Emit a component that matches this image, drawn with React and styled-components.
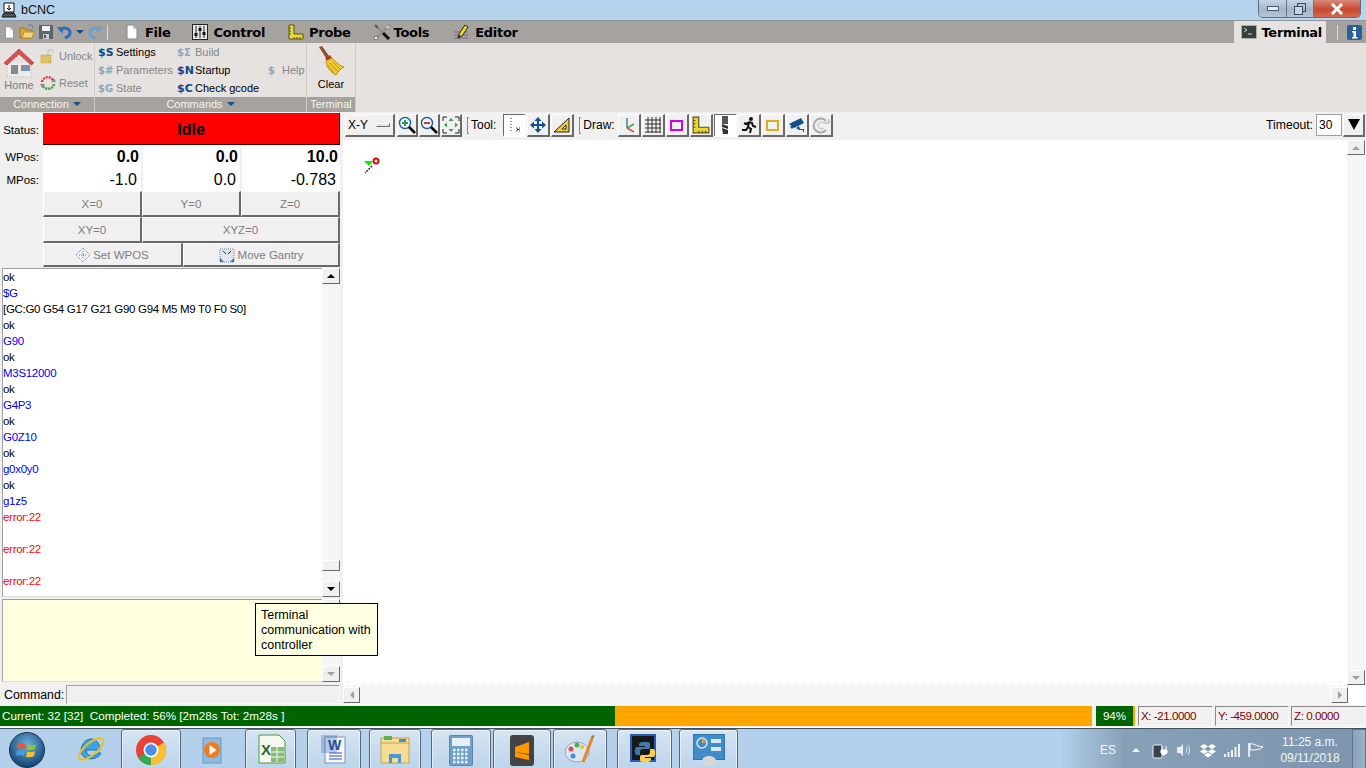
import React from 'react';
import styled, { createGlobalStyle } from 'styled-components';

const GlobalStyle = createGlobalStyle`
  html, body { margin: 0; padding: 0; height: 100%; overflow: hidden; }
  body { font-family: "Liberation Sans", Arial, sans-serif; font-size: 12px; color: #000; background: #f0f0f0; }
  * { box-sizing: border-box; }
`;

const hatch = 'repeating-conic-gradient(#eeeeee 0 25%, #ffffff 0 50%) 0 0 / 2px 2px';

const Window = styled.div`
  width: 1366px;
  height: 768px;
  display: flex;
  flex-direction: column;
  position: relative;
  overflow: hidden;
`;

/* title bar */
const TitleBar = styled.div`
  height: 21px;
  flex: none;
  display: flex;
  align-items: flex-start;
  background: linear-gradient(#b4d2ec, #b9d4ec);
  border-bottom: 1px solid #8a949c;
`;
const AppIcon = styled.span`
  margin: 2px 0 0 1px;
  width: 16px;
  height: 16px;
`;
const TitleText = styled.span`
  margin: 3px 0 0 4px;
  font-size: 12.5px;
  color: #111;
`;
const WinButtons = styled.div`
  margin-left: auto;
  margin-right: 5px;
  height: 18px;
  display: flex;
  border: 1px solid #5d6c7c;
  border-top: none;
  border-radius: 0 0 5px 5px;
  overflow: hidden;
`;
const WinButton = styled.div`
  width: ${p => p.$w}px;
  display: flex;
  align-items: center;
  justify-content: center;
  background: ${p => p.$close ? 'linear-gradient(#d68a78, #c8492f 55%, #cf6a50)' : 'linear-gradient(#c5d6e6, #a3b6ca 55%, #b4c6d8)'};
  border-right: 1px solid #66788a;
  &:last-child { border-right: none; }
`;

/* tab row */
const MenuRow = styled.div`
  height: 22px;
  flex: none;
  display: flex;
  align-items: center;
  background: #a6a29d;
`;
const Quick = styled.div`
  display: flex;
  align-items: center;
  gap: 3px;
  padding-left: 3px;
  width: 124px;
  flex: none;
`;
const QuickSep = styled.span`
  width: 1px;
  height: 15px;
  background: #e0ded9;
  margin-left: 1px;
`;
const Tab = styled.div`
  display: flex;
  align-items: center;
  gap: ${p => p.$gap || 5}px;
  height: 22px;
  margin-left: ${p => p.$auto ? 'auto' : `${p.$ml || 0}px`};
  margin-right: ${p => p.$mr || 0}px;
  padding: ${p => p.$active ? '0 4px 0 7px' : '0'};
  background: ${p => p.$active ? '#e6e2df' : 'transparent'};
  font-family: "DejaVu Sans", sans-serif;
  font-weight: bold;
  font-size: 13px;
  letter-spacing: -0.3px;
  color: #000;
`;
const TabSep = styled.span`
  width: 1px;
  height: 15px;
  background: #e0ded9;
  margin-left: 11px;
`;

/* ribbon */
const Ribbon = styled.div`
  height: 69px;
  flex: none;
  display: flex;
  background: #e6e2df;
`;
const Group = styled.div`
  width: ${p => p.$w}px;
  display: flex;
  flex-direction: column;
  border-right: 1px solid #cfcbc7;
`;
const GroupBody = styled.div`
  height: 54px;
  flex: none;
  display: flex;
`;
const GroupLabel = styled.div`
  flex: 1;
  display: flex;
  align-items: center;
  justify-content: center;
  gap: 4px;
  padding-bottom: 2px;
  background: #a6a29d;
  color: #f4f4f4;
  font-size: 11px;
`;
const Caret = styled.span`
  width: 0;
  height: 0;
  border-left: 4px solid transparent;
  border-right: 4px solid transparent;
  border-top: 4px solid #174f8c;
`;
const HomeBtn = styled.div`
  width: 38px;
  display: flex;
  flex-direction: column;
  align-items: center;
  padding-top: 5px;
  color: #7d7d7d;
  font-size: 11px;
  gap: 1px;
`;
const RibbonCol = styled.div`
  display: flex;
  flex-direction: column;
  padding: ${p => p.$pad || '0'};
  width: ${p => p.$w ? `${p.$w}px` : 'auto'};
  gap: ${p => p.$gap || 0}px;
`;
const SmallBtn = styled.div`
  height: ${p => p.$h || 18}px;
  display: flex;
  align-items: center;
  gap: 3px;
  white-space: nowrap;
  font-size: 11px;
  color: ${p => p.$off ? '#858585' : '#000'};
`;
const Dollar = styled.span`
  font-family: "DejaVu Sans", sans-serif;
  font-weight: bold;
  font-size: ${p => p.$off ? 10 : 11}px;
  color: ${p => p.$off ? '#8ca6c0' : '#0d4a8a'};
  width: ${p => p.$w || 15}px;
`;
const ClearBtn = styled.div`
  width: 100%;
  display: flex;
  flex-direction: column;
  align-items: center;
  padding-top: 3px;
  font-size: 11px;
  gap: 2px;
`;

/* main area */
const Main = styled.div`
  height: 593px;
  flex: none;
  display: flex;
  background: #f0f0f0;
`;
const LeftPanel = styled.div`
  width: 343px;
  flex: none;
  display: flex;
  flex-direction: column;
  padding-top: 1px;
`;
const StatusRow = styled.div`
  display: grid;
  grid-template-columns: 41px 297px;
  gap: 2px;
  height: 33px;
`;
const FieldLabel = styled.div`
  display: flex;
  align-items: center;
  justify-content: flex-end;
  padding-right: 2px;
  font-size: 11.5px;
`;
const IdleBar = styled.div`
  background: #ff0000;
  border-bottom: 1px solid #300;
  border-right: 1px solid #300;
  margin-bottom: 1px;
  padding-top: 2px;
  display: flex;
  align-items: center;
  justify-content: center;
  font-weight: bold;
  font-size: 16px;
`;
const Dro = styled.div`
  display: grid;
  grid-template-columns: 41px 98px 97px 98px;
  grid-auto-rows: 22.5px;
  column-gap: 2px;
`;
const DroValue = styled.div`
  background: #fff;
  display: flex;
  align-items: center;
  justify-content: flex-end;
  padding-right: ${p => p.$bold ? 2 : 4}px;
  font-size: 16px;
  font-weight: ${p => p.$bold ? 'bold' : 'normal'};
`;
const ButtonRow = styled.div`
  display: grid;
  grid-template-columns: ${p => p.$cols};
  margin-left: 43px;
  width: 297px;
  height: ${p => p.$h}px;
`;
const RaisedBtn = styled.div`
  display: flex;
  align-items: center;
  justify-content: center;
  gap: 3px;
  background: #f0f0f0;
  border: 1px solid;
  border-color: #fff #696969 #696969 #fff;
  border-right-width: 2px;
  border-bottom-width: 2px;
  color: #7d7d7d;
  font-size: 11.5px;
`;
const ListBox = styled.div`
  display: flex;
  height: ${p => p.$h}px;
  margin-top: ${p => p.$mt || 0}px;
  padding-left: 2px;
  width: 340px;
`;
const Lines = styled.div`
  flex: 1;
  background: ${p => p.$bg};
  border: 1px solid #a0a0a0;
  border-right: none;
  border-bottom-color: #dcdcdc;
  overflow: hidden;
  width: 320px;
`;
const Line = styled.div`
  height: 16px;
  line-height: 16px;
  font-size: 11.5px;
  letter-spacing: -0.3px;
  white-space: nowrap;
  color: ${p => p.$tone || '#000'};
`;
const VScroll = styled.div`
  width: 18px;
  flex: none;
  display: flex;
  flex-direction: column;
  background: ${hatch};
`;
const CanvasScroll = styled(VScroll)`
  margin-right: 1px;
`;
const ScrollBtn = styled.div`
  height: ${p => p.$h || 16}px;
  width: ${p => p.$w ? `${p.$w}px` : '100%'};
  flex: none;
  display: flex;
  align-items: center;
  justify-content: center;
  background: #f0f0f0;
  border: 1px solid;
  border-color: #fff #696969 #696969 #fff;
`;
const Track = styled.div`
  flex: ${p => p.$h ? 'none' : 1};
  height: ${p => p.$h ? `${p.$h}px` : 'auto'};
`;
const Arrow = styled.span`
  width: 0;
  height: 0;
  border-left: ${p => p.$dir === 'left' ? 'none' : p.$dir === 'right' ? `4px solid ${p.$c}` : '4px solid transparent'};
  border-right: ${p => p.$dir === 'right' ? 'none' : p.$dir === 'left' ? `4px solid ${p.$c}` : '4px solid transparent'};
  border-top: ${p => p.$dir === 'down' ? `4px solid ${p.$c}` : p.$dir === 'up' ? 'none' : '4px solid transparent'};
  border-bottom: ${p => p.$dir === 'up' ? `4px solid ${p.$c}` : p.$dir === 'down' ? 'none' : '4px solid transparent'};
`;
const CommandRow = styled.div`
  margin-top: 3px;
  display: flex;
  align-items: center;
  height: 19px;
  padding-left: 4px;
  width: 340px;
  font-size: 12.3px;
`;
const CommandInput = styled.div`
  flex: 1;
  height: 19px;
  margin-left: 2px;
  background: #f0f0f0;
  border: 1px solid;
  border-color: #a0a0a0 #f8f8f8 #f8f8f8 #a0a0a0;
`;
const Tooltip = styled.div`
  position: absolute;
  left: 255px;
  top: 603px;
  width: 123px;
  height: 53px;
  background: #ffffe1;
  border: 1px solid #000;
  padding: 4px 0 0 5px;
  font-size: 12.5px;
  line-height: 15px;
  z-index: 5;
`;

/* right side */
const RightPanel = styled.div`
  flex: 1;
  display: flex;
  flex-direction: column;
  min-width: 0;
  background: #fff;
`;
const Toolbar = styled.div`
  height: 28px;
  flex: none;
  display: flex;
  align-items: flex-start;
  padding: 2px 1px 0 2px;
  background: #f0f0f0;
  gap: 1px;
  font-size: 12px;
`;
const ToolBtn = styled.div`
  width: ${p => p.$w || 23}px;
  height: 23px;
  margin-left: ${p => p.$ml || 0}px;
  display: flex;
  align-items: center;
  justify-content: center;
  flex: none;
  background: ${p => p.$on ? '#fff' : '#f0f0f0'};
  border: 1px solid;
  border-color: ${p => p.$on ? '#696969 #fff #fff #696969' : '#fff #696969 #696969 #fff'};
  border-right-width: 2px;
  border-bottom-width: 2px;
`;
const Combo = styled(ToolBtn)`
  justify-content: flex-start;
  gap: 8px;
  padding-left: 2px;
  font-size: 12px;
`;
const ComboBar = styled.span`
  width: 14px;
  height: 4px;
  background: #e4e4e4;
  border: 1px solid;
  border-color: #fff #696969 #696969 #fff;
`;
const ToolSep = styled.span`
  width: 2px;
  height: 17px;
  margin: 3px 0 0 4px;
  border-left: 1px solid #8a8a8a;
  border-top: 1px solid #8a8a8a;
  border-bottom: 1px solid #8a8a8a;
`;
const ToolLabel = styled.span`
  line-height: 23px;
  margin: 0 ${p => p.$mr || 0}px 0 1px;
`;
const TimeoutLabel = styled.span`
  margin-left: auto;
  line-height: 23px;
  font-size: 12.2px;
`;
const TimeoutInput = styled.div`
  width: 26px;
  height: 22px;
  margin: 0 0 0 2px;
  background: #fff;
  border: 1px solid #a0a0a0;
  padding-left: 2px;
  line-height: 20px;
  font-size: 12px;
`;
const CanvasRow = styled.div`
  flex: 1;
  display: flex;
  min-height: 0;
`;
const Canvas = styled.div`
  flex: 1;
  position: relative;
  background: #fff;
  margin-left: 2px;
`;
const Marker = styled.svg`
  position: absolute;
  left: 19px;
  top: 17px;
`;
const HScroll = styled.div`
  height: 20px;
  flex: none;
  display: flex;
  background: ${hatch};
  padding: 2px 0;
  margin-right: 18px;
  & > div:last-child { margin-left: auto; }
`;

/* progress strip */
const StatusStrip = styled.div`
  height: 22px;
  flex: none;
  margin-top: 1px;
  display: flex;
  background: #f0f0f0;
  border-bottom: 1px solid #fff;
`;
const Progress = styled.div`
  width: 1092px;
  height: 20px;
  flex: none;
  display: flex;
  background: #ffa500;
  margin-right: 4px;
`;
const Done = styled.div`
  width: 615px;
  background: #006400;
  color: #fff;
  font-size: 11.7px;
  line-height: 20px;
  padding-left: 2px;
  white-space: pre;
`;
const Percent = styled.div`
  width: 39px;
  height: 20px;
  flex: none;
  background: #006400;
  border-right: 2px solid #ffa500;
  color: #fff;
  text-align: center;
  line-height: 20px;
  font-size: 11.6px;
  margin-right: 3px;
`;
const Coord = styled.div`
  width: ${p => p.$w}px;
  height: 20px;
  flex: none;
  margin-right: 2px;
  border: 1px solid;
  border-color: #8a8a8a #f8f8f8 #f8f8f8 #8a8a8a;
  color: #800000;
  padding-left: 2px;
  line-height: 18px;
  font-size: 11.6px;
  letter-spacing: -0.45px;
`;

/* windows taskbar */
const Taskbar = styled.div`
  flex: 1;
  display: flex;
  align-items: stretch;
  border-top: 1px solid #3f4f5f;
  background: linear-gradient(90deg, #b5d0ea 0, #b5d0ea 1060px, #86a0b8 1125px, #7d96ad 100%);
`;
const Orb = styled.div`
  width: 73px;
  flex: none;
  padding: 3px 0 0 9px;
`;
const Pin = styled.div`
  width: ${p => p.$w}px;
  margin-left: ${p => p.$ml || 0}px;
  flex: none;
  display: flex;
  align-items: center;
  justify-content: center;
  border: ${p => p.$plain ? '1px solid transparent' : '1px solid #56697c'};
  border-radius: 3px;
  background: ${p => p.$plain ? 'transparent' : 'linear-gradient(#d5e4f2, #bcd4ea)'};
  box-shadow: ${p => p.$plain ? 'none' : 'inset 0 0 0 1px rgba(255,255,255,.55)'};
`;
const Tray = styled.div`
  margin-left: auto;
  display: flex;
  align-items: center;
  color: #f2f6fa;
  font-size: 12px;
`;
const TrayLang = styled.span`
  margin-right: 8px;
`;
const TrayIcon = styled.span`
  width: 24px;
  display: flex;
  justify-content: center;
`;
const Clock = styled.div`
  width: 74px;
  margin-left: 5px;
  text-align: center;
  line-height: 16px;
  font-size: 12px;
`;
const ShowDesktop = styled.div`
  width: 14px;
  height: 100%;
  margin-left: 5px;
  border: 1px solid #5f7489;
  background: linear-gradient(90deg, #8aa3ba, #9bb2c8);
`;

/* icons */
const Svg = ({ s = 16, w, h, vb, children }) => (
  <svg width={w || s} height={h || s} viewBox={vb || `0 0 ${w || s} ${h || s}`}>{children}</svg>
);

const DocIcon = ({ s = 16 }) => (
  <Svg s={s} vb="0 0 16 16">
    <path d="M3 1h7l3 3v11H3z" fill="#fdfdfd" stroke="#7f8a99" />
    <path d="M10 1v3h3" fill="#d5deea" stroke="#7f8a99" />
  </Svg>
);
const OpenIcon = () => (
  <Svg>
    <path d="M1 4h5l1 2h6v8H1z" fill="#d9a63b" stroke="#a27a26" />
    <path d="M3 14l2-6h10l-2 6z" fill="#f6d67d" stroke="#b88d2d" />
    <path d="M9 1l4 0 1 3" fill="none" stroke="#5a7fa8" />
  </Svg>
);
const SaveIcon = () => (
  <Svg>
    <path d="M1 1h14v14H1z" fill="#5b6470" />
    <path d="M4 2h8v5H4z" fill="#f2f2f2" />
    <path d="M5 10h6v5H5z" fill="#c8ccd2" />
    <path d="M6 11h2v3H6z" fill="#4b535e" />
  </Svg>
);
const UndoIcon = ({ flip, c = '#2f6cbf' }) => (
  <Svg>
    <g transform={flip ? 'matrix(-1 0 0 1 16 0)' : undefined}>
      <path d="M3 7c2-4 9-4 10 1 .4 3-2 5-5 6" fill="none" stroke={c} strokeWidth="3" />
      <path d="M0 3l6 0 0 7z" fill={c} />
    </g>
  </Svg>
);
const ControlIcon = () => (
  <Svg>
    <rect x=".5" y=".5" width="15" height="15" fill="#e8e8e8" stroke="#222" />
    <path d="M4 2v12M8 2v12M12 2v12" stroke="#222" />
    <rect x="2.500" y="9" width="3" height="3" fill="#111" />
    <rect x="6.500" y="4" width="3" height="3" fill="#111" />
    <rect x="10.500" y="8" width="3" height="3" fill="#111" />
  </Svg>
);
const RulerIcon = ({ s = 16 }) => (
  <Svg s={s} vb="0 0 16 16">
    <path d="M1 1h5v9h9v5H1z" fill="#e8d838" stroke="#5a5210" />
    <path d="M1 4h2M1 7h2M1 10h2M6 15v-2M9 15v-2M12 15v-2" stroke="#5a5210" />
  </Svg>
);
const ToolsIcon = () => (
  <Svg w={18} h={16}>
    <path d="M2 1l3 3" stroke="#555" strokeWidth="2" />
    <path d="M5 4l5 5" stroke="#888" strokeWidth="1.600" />
    <path d="M9 8l7 7" stroke="#111" strokeWidth="3" />
    <path d="M14 4L3 14" stroke="#8f8f8f" strokeWidth="2.200" />
    <path d="M16 1c-2-1-4 1-3 3l2 1c2 0 3-2 2-4l-2 2z" fill="#d8d8d8" stroke="#777" strokeWidth=".7" />
    <circle cx="3" cy="14" r="2" fill="#f0f0f0" stroke="#666" />
  </Svg>
);
const EditorIcon = () => (
  <Svg>
    <path d="M0 8h14M0 11h14M0 14h14" stroke="#7468a0" />
    <path d="M5 10l6-9 3 2-6 9-4 2z" fill="#f5d823" stroke="#222" />
    <path d="M4 14l1-3 2 1z" fill="#222" />
  </Svg>
);
const TerminalIcon = () => (
  <Svg>
    <rect x=".5" y="1.500" width="15" height="13" fill="#34403c" stroke="#a9aeb0" />
    <path d="M3 4l3 2-3 2M7 10h4" stroke="#c8d0cc" fill="none" />
  </Svg>
);
const InfoIcon = () => (
  <Svg s={15} w={15} h={15}>
    <rect width="15" height="15" rx="2" fill="#2a6099" />
    <rect x="6" y="2" width="3" height="3" fill="#fff" />
    <path d="M5 6h4v6h1.500v1.500h-5.500V12h1.500V7.500H5z" fill="#fff" />
  </Svg>
);
const HomeIcon = () => (
  <Svg w={32} h={30} vb="0 0 32 30">
    <path d="M4 15v14h24V15" fill="#ececec" stroke="#bbb" strokeDasharray="1 1" />
    <path d="M1 15L16 1l15 14-3 2L16 6 4 17z" fill="#d95050" stroke="#b03434" strokeDasharray="2 1" />
    <rect x="8" y="17" width="7" height="9" fill="#888" />
    <rect x="18" y="17" width="9" height="6" fill="#7d8fb0" />
  </Svg>
);
const UnlockIcon = () => (
  <Svg>
    <rect x="1" y="7" width="10" height="8" fill="#e0c060" stroke="#bda24e" strokeDasharray="1 1" />
    <path d="M8 7V3c1-2 4-2 5 0v2" fill="none" stroke="#aaa" strokeDasharray="1 1" strokeWidth="1.500" />
  </Svg>
);
const ResetIcon = () => (
  <Svg>
    <path d="M2 7a6 6 0 0 1 11-2" fill="none" stroke="#d84040" strokeWidth="2.500" strokeDasharray="2 1" />
    <path d="M14 9a6 6 0 0 1-11 2" fill="none" stroke="#36a030" strokeWidth="2.500" strokeDasharray="2 1" />
    <path d="M11 7h5l-2-4zM5 9H0l2 4z" fill="#8a8a8a" />
  </Svg>
);
const BroomIcon = () => (
  <Svg w={28} h={30} vb="0 0 28 30">
    <path d="M2 1l3-1 7 10-3 2z" fill="#8a5428" />
    <path d="M8 12l5-3 2 3-5 3z" fill="#c0302a" />
    <path d="M9 15l6-3c4 4 8 8 12 9-4 2-6 5-8 8-3-1-7-5-9-9z" fill="#eec92f" stroke="#b8941c" />
    <path d="M13 17l8 9M11 19l6 8M16 16l7 7" stroke="#b8941c" />
  </Svg>
);
const TargetIcon = () => (
  <Svg s={14}>
    <path d="M7 0l7 7-7 7-7-7z" fill="none" stroke="#4f82c0" strokeDasharray="1 1" />
    <path d="M7 3v8M3 7h8" stroke="#4f82c0" strokeDasharray="1 1" />
  </Svg>
);
const GantryIcon = () => (
  <Svg>
    <rect x="1" y="2" width="14" height="13" fill="#dfe6ee" stroke="#6688aa" strokeDasharray="1 1" />
    <path d="M1 11l4 4h6l4-4v4H1z" fill="#3f6f9f" />
    <path d="M4 4l3 3M12 4L9 7" stroke="#333" />
  </Svg>
);
const ZoomIcon = ({ kind }) => (
  <Svg s={18}>
    <circle cx="7" cy="7" r="5.500" fill="#f2f7fb" stroke="#1e5e9c" strokeWidth="1.400" />
    <path d="M4 7h6" stroke={kind === 'in' ? '#2c9a50' : '#c83c3c'} strokeWidth="2" />
    {kind === 'in' && <path d="M7 4v6" stroke="#2c9a50" strokeWidth="2" />}
    <path d="M11 11l6 6" stroke="#000" strokeWidth="2.500" />
  </Svg>
);
const FitIcon = () => (
  <Svg s={18}>
    <path d="M1 5V1h4M13 1h4v4M17 13v4h-4M5 17H1v-4" fill="none" stroke="#222" />
    <path d="M9 2l2.500 3h-5zM9 16l2.500-3h-5zM2 9l3-2.500v5zM16 9l-3-2.500v5z" fill="#3f9a55" />
  </Svg>
);
const PointerIcon = () => (
  <Svg>
    <path d="M5 1v14" stroke="#333" strokeDasharray="1 2" />
    <path d="M10 11h1M13 11h1M10 14h1M13 14h1M11 12h2v1h-2z" stroke="#333" strokeDasharray="1 1" />
  </Svg>
);
const MoveIcon = () => (
  <Svg s={18}>
    <path d="M9 1l3.500 4H10v3h3V5.500L17 9l-4 3.500V10h-3v3h2.500L9 17l-3.500-4H8v-3H5v2.500L1 9l4-3.500V8h3V5H5.500z" fill="#12508f" />
  </Svg>
);
const SquareIcon = () => (
  <Svg s={18}>
    <path d="M1 16L16 2v14z" fill="#eec92f" stroke="#222" />
    <path d="M9 13l4-4v4z" fill="#f0f0f0" stroke="#222" />
  </Svg>
);
const AxesIcon = () => (
  <Svg s={18}>
    <path d="M7 2v10" stroke="#4a8f9a" strokeWidth="1.600" />
    <path d="M7 12l7-4" stroke="#4fa04f" strokeWidth="1.600" />
    <path d="M7 12l7 4" stroke="#d65050" strokeWidth="1.600" />
  </Svg>
);
const GridIcon = () => (
  <Svg s={18}>
    <path d="M1 4h16M1 8h16M1 12h16M1 16h16M4 1v16M8 1v16M12 1v16M16 1v16" stroke="#333" />
  </Svg>
);
const RectIcon = ({ c, s = 12, h = 10 }) => (
  <Svg w={s + 1} h={h + 1}>
    <rect x="1" y="1" width={s - 1} height={h - 1} fill="none" stroke={c} strokeWidth="2" />
  </Svg>
);
const EndmillIcon = () => (
  <Svg w={8} h={19}>
    <rect x="1" y="0" width="6" height="8" fill="#555" />
    <path d="M1 8l6 2v3l-6-2zM1 12l6 2v4H2z" fill="#333" />
  </Svg>
);
const RunnerIcon = () => (
  <Svg s={18}>
    <circle cx="11" cy="3" r="2" fill="#111" />
    <path d="M9 6l3 1 1 3 3 1M9 6L6 8 4 7M9 6l-1 5 3 2-1 4M8 11l-2 3-4 0" fill="none" stroke="#111" strokeWidth="2" />
  </Svg>
);
const CameraIcon = () => (
  <Svg s={18}>
    <path d="M1 8l12-6 3 5-10 5z" fill="#174f8c" />
    <path d="M8 12l3-2 1 3h4v3h-1v-2h-4z" fill="#174f8c" />
    <circle cx="4" cy="11" r="1.500" fill="#174f8c" />
  </Svg>
);
const RedoGrayIcon = () => (
  <Svg s={18}>
    <path d="M14 5a7 7 0 1 0 0 9" fill="none" stroke="#aaa" strokeWidth="2" />
    <path d="M12 7a3.500 3.500 0 1 0 0 5" fill="none" stroke="#bbb" />
    <path d="M17 3v4h-5" fill="#f0f0f0" stroke="#aaa" />
  </Svg>
);
const TimeIcon = () => (
  <Svg w={14} h={16}>
    <path d="M1 2h12l-6 11z" fill="#000" />
  </Svg>
);

const StartOrb = () => (
  <Svg s={36}>
    <defs>
      <radialGradient id="orb" cx="50%" cy="35%" r="65%">
        <stop offset="0" stopColor="#6fb0de" />
        <stop offset="1" stopColor="#12406e" />
      </radialGradient>
    </defs>
    <circle cx="18" cy="18" r="17.500" fill="url(#orb)" stroke="#16344f" />
    <path d="M9 12c3-1.500 5-1 8 0l-1 5c-3-1-5-1.500-8 0z" fill="#e8563a" />
    <path d="M19 12.500c3 1 5 1 8-.5l-1 5c-3 1.500-5 1.500-8 .5z" fill="#8cc63f" />
    <path d="M8 19c3-1.500 5-1 8 0l-1 5c-3-1-5-1.500-8 0z" fill="#3fa0e0" />
    <path d="M18 19.500c3 1 5 1 8-.5l-1 5c-3 1.500-5 1.500-8 .5z" fill="#f5c330" />
  </Svg>
);
const IeIcon = () => (
  <Svg w={32} h={36}>
    <path d="M6 19c0-7 5-12 10-12s9 4 9 11H11c0 6 8 8 12 3h3c-3 8-20 8-20-2z" fill="#3aa4e8" stroke="#1d6fb5" />
    <ellipse cx="16" cy="17" rx="15" ry="6" transform="rotate(-40 16 17)" fill="none" stroke="#f0c020" strokeWidth="2" />
  </Svg>
);
const ChromeIcon = () => (
  <Svg s={32}>
    <circle cx="16" cy="16" r="15" fill="#e84335" />
    <path d="M16 16L3 23.500A15 15 0 0 0 16 31z" fill="#34a853" />
    <path d="M16 16l0 15A15 15 0 0 0 29 8.500z" fill="#fbc02d" />
    <circle cx="16" cy="16" r="7.500" fill="#fff" />
    <circle cx="16" cy="16" r="5.800" fill="#4a8df0" />
  </Svg>
);
const MediaIcon = () => (
  <Svg w={24} h={30}>
    <rect x="2" y="3" width="18" height="25" fill="#8dbbe0" stroke="#6c9cc4" />
    <circle cx="11" cy="15" r="8" fill="#ef7d1f" />
    <path d="M8.500 10l7 5-7 5z" fill="#fff" />
  </Svg>
);
const ExcelIcon = () => (
  <Svg w={30} h={32}>
    <path d="M3 1h20l6 6v22H3z" fill="#f4f8f1" stroke="#4d9a3e" />
    <path d="M15 13h13v15H15z" fill="#8ab97c" />
    <path d="M15 18h13M15 23h13M21 13v15" stroke="#f4f8f1" />
    <text x="5" y="21" fontFamily="Liberation Sans" fontWeight="bold" fontSize="15" fill="#1d6f2e">X</text>
  </Svg>
);
const WordIcon = () => (
  <Svg w={30} h={32}>
    <path d="M6 3h20v26H6z" fill="#f5f7fb" stroke="#7d92b8" />
    <path d="M2 1h16v18H2z" fill="#2a5db0" opacity=".3" />
    <text x="9" y="16" fontFamily="Liberation Sans" fontWeight="bold" fontSize="14" fill="#1e4f9f">W</text>
    <path d="M10 19h13M10 22h13M10 25h13" stroke="#2a5db0" />
  </Svg>
);
const FolderIcon = () => (
  <Svg w={32} h={30}>
    <path d="M2 3h28v25H2z" fill="#f7dd93" stroke="#c7a24e" />
    <path d="M2 8h28" stroke="#c7a24e" />
    <rect x="5" y="1" width="8" height="4" fill="#5fb04f" />
    <rect x="20" y="4" width="7" height="3" fill="#3f8fd8" />
    <path d="M10 28v-9h12v9h-3v-5h-6v5z" fill="#4b97d8" />
  </Svg>
);
const CalcIcon = () => (
  <Svg w={24} h={31}>
    <rect x=".5" y=".5" width="23" height="30" rx="1" fill="#6f9fcb" stroke="#5c86ae" />
    <rect x="3" y="3" width="18" height="8" fill="#e7eff7" />
    <path d="M4 15h16M4 19h16M4 23h16M4 27h16" stroke="#f0f4f8" strokeWidth="2.500" strokeDasharray="2.500 1.500" />
  </Svg>
);
const SublimeIcon = () => (
  <Svg w={24} h={31}>
    <rect width="24" height="31" rx="3" fill="#444" />
    <path d="M5 12l14-5v5L5 17zM5 17l14 3v5l-14-3zM5 17l14-5v7z" fill="#ff9800" />
  </Svg>
);
const PaintIcon = () => (
  <Svg w={32} h={32}>
    <ellipse cx="13" cy="18" rx="12" ry="10" fill="#dce6ee" stroke="#93a8ba" />
    <circle cx="7" cy="15" r="2.500" fill="#e04f40" />
    <circle cx="13" cy="11" r="2.500" fill="#4fb04f" />
    <circle cx="9" cy="22" r="2.500" fill="#3f8fd8" />
    <circle cx="18" cy="13" r="2" fill="#f0c020" />
    <path d="M29 2L19 28" stroke="#e08a2c" strokeWidth="3" />
    <path d="M31 1l-4 1 2 2z" fill="#8a7a5a" />
  </Svg>
);
const PythonIcon = () => (
  <Svg w={30} h={32}>
    <rect x="1" y="1" width="24" height="26" fill="#16181c" stroke="#2a5db0" strokeWidth="2" />
    <path d="M14 8c-5 0-5 2-5 4h6v1H7c-3 0-3 8 0 8h3v-3c0-2 1-3 3-3h5c2 0 2-1 2-2v-3c0-2-2-2-6-2z" fill="#3f79ac" />
    <path d="M16 28c5 0 5-2 5-4h-6v-1h8c3 0 3-8 0-8h-3v3c0 2-1 3-3 3h-5c-2 0-2 1-2 2v3c0 2 2 2 6 2z" fill="#f6cf4b" />
  </Svg>
);
const PanelIcon = () => (
  <Svg w={32} h={32}>
    <rect x=".5" y=".5" width="31" height="25" fill="#3f8cc8" stroke="#2f74aa" />
    <circle cx="9" cy="9" r="5" fill="none" stroke="#d8e8f4" strokeWidth="1.500" />
    <path d="M9 4l4 5H9z" fill="#f0a030" />
    <rect x="18" y="5" width="10" height="4" fill="#d8e8f4" />
    <rect x="18" y="13" width="10" height="4" fill="#d8e8f4" />
    <ellipse cx="16" cy="27" rx="7" ry="5" fill="#d8d8d8" />
  </Svg>
);
const PlugIcon = () => (
  <Svg w={17} h={17}>
    <rect x="1" y="3" width="9" height="13" rx="1" fill="#39434d" stroke="#eef" />
    <path d="M9 8h6v3l-3 2h-1l-2-2z M10 4v4M14 4v4" fill="#fff" stroke="#fff" />
  </Svg>
);
const SpeakerIcon = () => (
  <Svg w={16} h={16}>
    <path d="M1 5h3l3-3v12l-3-3H1z" fill="#e8eef4" />
    <path d="M10 5c1 2 1 4 0 6M12 3c2 3 2 7 0 10" fill="none" stroke="#e8eef4" />
  </Svg>
);
const DropboxIcon = () => (
  <Svg w={16} h={15}>
    <path d="M4 1l4 2.500L4 6 0 3.500zM12 1l4 2.500L12 6 8 3.500zM4 6l4 2.500L4 11 0 8.500zM12 6l4 2.500L12 11 8 8.500zM8 9.500l4 2.500-4 2.500L4 12z" fill="#fff" />
  </Svg>
);
const SignalIcon = () => (
  <Svg w={16} h={13}>
    <path d="M0 10h2v3H0zM3.500 8h2v5h-2zM7 6h2v7H7zM10.500 3h2v10h-2zM14 0h2v13h-2z" fill="#eef2f6" />
  </Svg>
);
const FlagIcon = () => (
  <Svg w={16} h={16}>
    <path d="M1 1v14" stroke="#fff" strokeWidth="1.500" />
    <path d="M2 2c4-1 5 2 13 3-3 3-8 3-13 3z" fill="none" stroke="#fff" />
  </Svg>
);

const terminal = [
  ['ok'], ['$G', 'blue'], ['[GC:G0 G54 G17 G21 G90 G94 M5 M9 T0 F0 S0]'], ['ok'], ['G90', 'blue'], ['ok'],
  ['M3S12000', 'blue'], ['ok'], ['G4P3', 'blue'], ['ok'], ['G0Z10', 'blue'], ['ok'], ['g0x0y0', 'blue'], ['ok'],
  ['g1z5', 'blue'], ['error:22', 'red'], ['\u00a0'], ['error:22', 'red'], ['\u00a0'], ['error:22', 'red'],
];
const tones = { blue: '#0000ff', red: '#ff0000' };

const App = () => (
  <Window>
    <GlobalStyle />
    <TitleBar>
      <AppIcon>
        <Svg>
          <path d="M3 1h10v9H3z" fill="#fff" stroke="#111" />
          <path d="M8 3v5M6 6l2 2 2-2" stroke="#111" fill="none" />
          <path d="M1 15l2-4h10l2 4z" fill="#555" stroke="#111" />
        </Svg>
      </AppIcon>
      <TitleText>bCNC</TitleText>
      <WinButtons>
        <WinButton $w={28}>
          <Svg w={12} h={6}><rect x=".5" y=".5" width="11" height="4" fill="#e8eef4" stroke="#4c5c6c" /></Svg>
        </WinButton>
        <WinButton $w={27}>
          <Svg w={12} h={12}>
            <rect x="3.500" y=".5" width="8" height="8" fill="none" stroke="#3c4c5c" />
            <rect x=".5" y="3.500" width="8" height="8" fill="#c8d6e4" stroke="#3c4c5c" />
          </Svg>
        </WinButton>
        <WinButton $w={46} $close>
          <Svg w={14} h={12}><path d="M2 1l10 10M12 1L2 11" stroke="#fff" strokeWidth="3" /></Svg>
        </WinButton>
      </WinButtons>
    </TitleBar>

    <MenuRow>
      <Quick>
        <DocIcon s={13} />
        <OpenIcon />
        <SaveIcon />
        <UndoIcon />
        <Caret />
        <UndoIcon flip c="#6c9ed8" />
        <QuickSep />
      </Quick>
      <Tab><DocIcon />File</Tab>
      <Tab $ml={22}><ControlIcon />Control</Tab>
      <Tab $ml={23}><RulerIcon />Probe</Tab>
      <Tab $ml={22} $gap={3}><ToolsIcon />Tools</Tab>
      <Tab $ml={25}><EditorIcon />Editor</Tab>
      <Tab $active $auto><TerminalIcon />Terminal</Tab>
      <TabSep />
      <Tab $ml={9} $mr={4}><InfoIcon /></Tab>
    </MenuRow>

    <Ribbon>
      <Group $w={95}>
        <GroupBody>
          <HomeBtn><HomeIcon />Home</HomeBtn>
          <RibbonCol $pad="4px 0 0 2px" $gap={9}>
            <SmallBtn $off $h={18}><UnlockIcon />Unlock</SmallBtn>
            <SmallBtn $off $h={18}><ResetIcon />Reset</SmallBtn>
          </RibbonCol>
        </GroupBody>
        <GroupLabel>Connection<Caret /></GroupLabel>
      </Group>
      <Group $w={212}>
        <GroupBody>
          <RibbonCol $pad="0 0 0 3px" $w={82}>
            <SmallBtn><Dollar>$S</Dollar>Settings</SmallBtn>
            <SmallBtn $off><Dollar $off>$#</Dollar>Parameters</SmallBtn>
            <SmallBtn $off><Dollar $off>$G</Dollar>State</SmallBtn>
          </RibbonCol>
          <RibbonCol $w={91}>
            <SmallBtn $off><Dollar $off>$Σ</Dollar>Build</SmallBtn>
            <SmallBtn><Dollar>$N</Dollar>Startup</SmallBtn>
            <SmallBtn><Dollar>$C</Dollar>Check gcode</SmallBtn>
          </RibbonCol>
          <RibbonCol>
            <SmallBtn $off $h={54}><Dollar $off $w={11}>$</Dollar>Help</SmallBtn>
          </RibbonCol>
        </GroupBody>
        <GroupLabel>Commands<Caret /></GroupLabel>
      </Group>
      <Group $w={49}>
        <GroupBody>
          <ClearBtn><BroomIcon />Clear</ClearBtn>
        </GroupBody>
        <GroupLabel>Terminal</GroupLabel>
      </Group>
    </Ribbon>

    <Main>
      <LeftPanel>
        <StatusRow>
          <FieldLabel>Status:</FieldLabel>
          <IdleBar>Idle</IdleBar>
        </StatusRow>
        <Dro>
          <FieldLabel>WPos:</FieldLabel>
          <DroValue $bold>0.0</DroValue>
          <DroValue $bold>0.0</DroValue>
          <DroValue $bold>10.0</DroValue>
          <FieldLabel>MPos:</FieldLabel>
          <DroValue>-1.0</DroValue>
          <DroValue>0.0</DroValue>
          <DroValue>-0.783</DroValue>
        </Dro>
        <ButtonRow $cols="99px 99px 99px" $h={26}>
          <RaisedBtn>X=0</RaisedBtn>
          <RaisedBtn>Y=0</RaisedBtn>
          <RaisedBtn>Z=0</RaisedBtn>
        </ButtonRow>
        <ButtonRow $cols="99px 198px" $h={26}>
          <RaisedBtn>XY=0</RaisedBtn>
          <RaisedBtn>XYZ=0</RaisedBtn>
        </ButtonRow>
        <ButtonRow $cols="140px 157px" $h={24}>
          <RaisedBtn><TargetIcon />Set WPOS</RaisedBtn>
          <RaisedBtn><GantryIcon />Move Gantry</RaisedBtn>
        </ButtonRow>
        <ListBox $h={329} $mt={1}>
          <Lines $bg="#ffffff">
            {terminal.map(([text, tone], i) => (
              <Line key={i} $tone={tones[tone]}>{text}</Line>
            ))}
          </Lines>
          <VScroll>
            <ScrollBtn><Arrow $dir="up" $c="#000" /></ScrollBtn>
            <Track />
            <ScrollBtn $h={11} />
            <Track $h={10} />
            <ScrollBtn><Arrow $dir="down" $c="#000" /></ScrollBtn>
          </VScroll>
        </ListBox>
        <ListBox $h={83} $mt={2}>
          <Lines $bg="#ffffe0" />
          <VScroll>
            <ScrollBtn><Arrow $dir="up" $c="#a0a0a0" /></ScrollBtn>
            <Track />
            <ScrollBtn><Arrow $dir="down" $c="#a0a0a0" /></ScrollBtn>
          </VScroll>
        </ListBox>
        <CommandRow>
          Command:
          <CommandInput />
        </CommandRow>
      </LeftPanel>

      <RightPanel>
        <Toolbar>
          <Combo $w={50}>X-Y<ComboBar /></Combo>
          <ToolBtn $w={21} $ml={1}><ZoomIcon kind="in" /></ToolBtn>
          <ToolBtn $w={21}><ZoomIcon kind="out" /></ToolBtn>
          <ToolBtn $w={21}><FitIcon /></ToolBtn>
          <ToolSep />
          <ToolLabel $mr={6}>Tool:</ToolLabel>
          <ToolBtn $on><PointerIcon /></ToolBtn>
          <ToolBtn><MoveIcon /></ToolBtn>
          <ToolBtn><SquareIcon /></ToolBtn>
          <ToolSep />
          <ToolLabel $mr={2}>Draw:</ToolLabel>
          <ToolBtn><AxesIcon /></ToolBtn>
          <ToolBtn><GridIcon /></ToolBtn>
          <ToolBtn><RectIcon c="#d000e8" /></ToolBtn>
          <ToolBtn><RulerIcon s={18} /></ToolBtn>
          <ToolBtn $on><EndmillIcon /></ToolBtn>
          <ToolBtn><RunnerIcon /></ToolBtn>
          <ToolBtn><RectIcon c="#d8b020" /></ToolBtn>
          <ToolBtn><CameraIcon /></ToolBtn>
          <ToolBtn><RedoGrayIcon /></ToolBtn>
          <TimeoutLabel>Timeout:</TimeoutLabel>
          <TimeoutInput>30</TimeoutInput>
          <ToolBtn $w={22}><TimeIcon /></ToolBtn>
        </Toolbar>
        <CanvasRow>
          <Canvas>
            <Marker width="18" height="18" viewBox="0 0 18 18">
              <path d="M0 4l9 0-4 5z" fill="#00f000" />
              <path d="M8 9L1 16" stroke="#111" strokeWidth="1.200" strokeDasharray="2 1" />
              <circle cx="12" cy="4" r="2.500" fill="none" stroke="#f00000" strokeWidth="2" />
            </Marker>
          </Canvas>
          <CanvasScroll>
            <ScrollBtn $h={15}><Arrow $dir="up" $c="#a0a0a0" /></ScrollBtn>
            <Track />
            <ScrollBtn $h={15}><Arrow $dir="down" $c="#a0a0a0" /></ScrollBtn>
          </CanvasScroll>
        </CanvasRow>
        <HScroll>
          <ScrollBtn $w={17} $h={16}><Arrow $dir="left" $c="#a0a0a0" /></ScrollBtn>
          <ScrollBtn $w={17} $h={16}><Arrow $dir="right" $c="#a0a0a0" /></ScrollBtn>
        </HScroll>
      </RightPanel>
    </Main>

    <StatusStrip>
      <Progress>
        <Done>Current: 32 [32]  Completed: 56% [2m28s Tot: 2m28s ]</Done>
      </Progress>
      <Percent>94%</Percent>
      <Coord $w={75}>X: -21.0000</Coord>
      <Coord $w={74}>Y: -459.0000</Coord>
      <Coord $w={75}>Z: 0.0000</Coord>
    </StatusStrip>

    <Taskbar>
      <Orb><StartOrb /></Orb>
      <Pin $w={36} $plain><IeIcon /></Pin>
      <Pin $w={60} $ml={12}><ChromeIcon /></Pin>
      <Pin $w={58} $ml={3} $plain><MediaIcon /></Pin>
      <Pin $w={51} $ml={3}><ExcelIcon /></Pin>
      <Pin $w={54} $ml={11}><WordIcon /></Pin>
      <Pin $w={52} $ml={8}><FolderIcon /></Pin>
      <Pin $w={60} $ml={10}><CalcIcon /></Pin>
      <Pin $w={58} $ml={2}><SublimeIcon /></Pin>
      <Pin $w={54} $ml={2}><PaintIcon /></Pin>
      <Pin $w={55} $ml={10}><PythonIcon /></Pin>
      <Pin $w={59} $ml={7}><PanelIcon /></Pin>
      <Tray>
        <TrayLang>ES</TrayLang>
        <TrayIcon><Arrow $dir="up" $c="#f2f6fa" /></TrayIcon>
        <TrayIcon><PlugIcon /></TrayIcon>
        <TrayIcon><SpeakerIcon /></TrayIcon>
        <TrayIcon><DropboxIcon /></TrayIcon>
        <TrayIcon><SignalIcon /></TrayIcon>
        <TrayIcon><FlagIcon /></TrayIcon>
        <Clock>11:25 a.m.<br />09/11/2018</Clock>
        <ShowDesktop />
      </Tray>
    </Taskbar>

    <Tooltip>Terminal<br />communication with<br />controller</Tooltip>
  </Window>
);

export default App;
